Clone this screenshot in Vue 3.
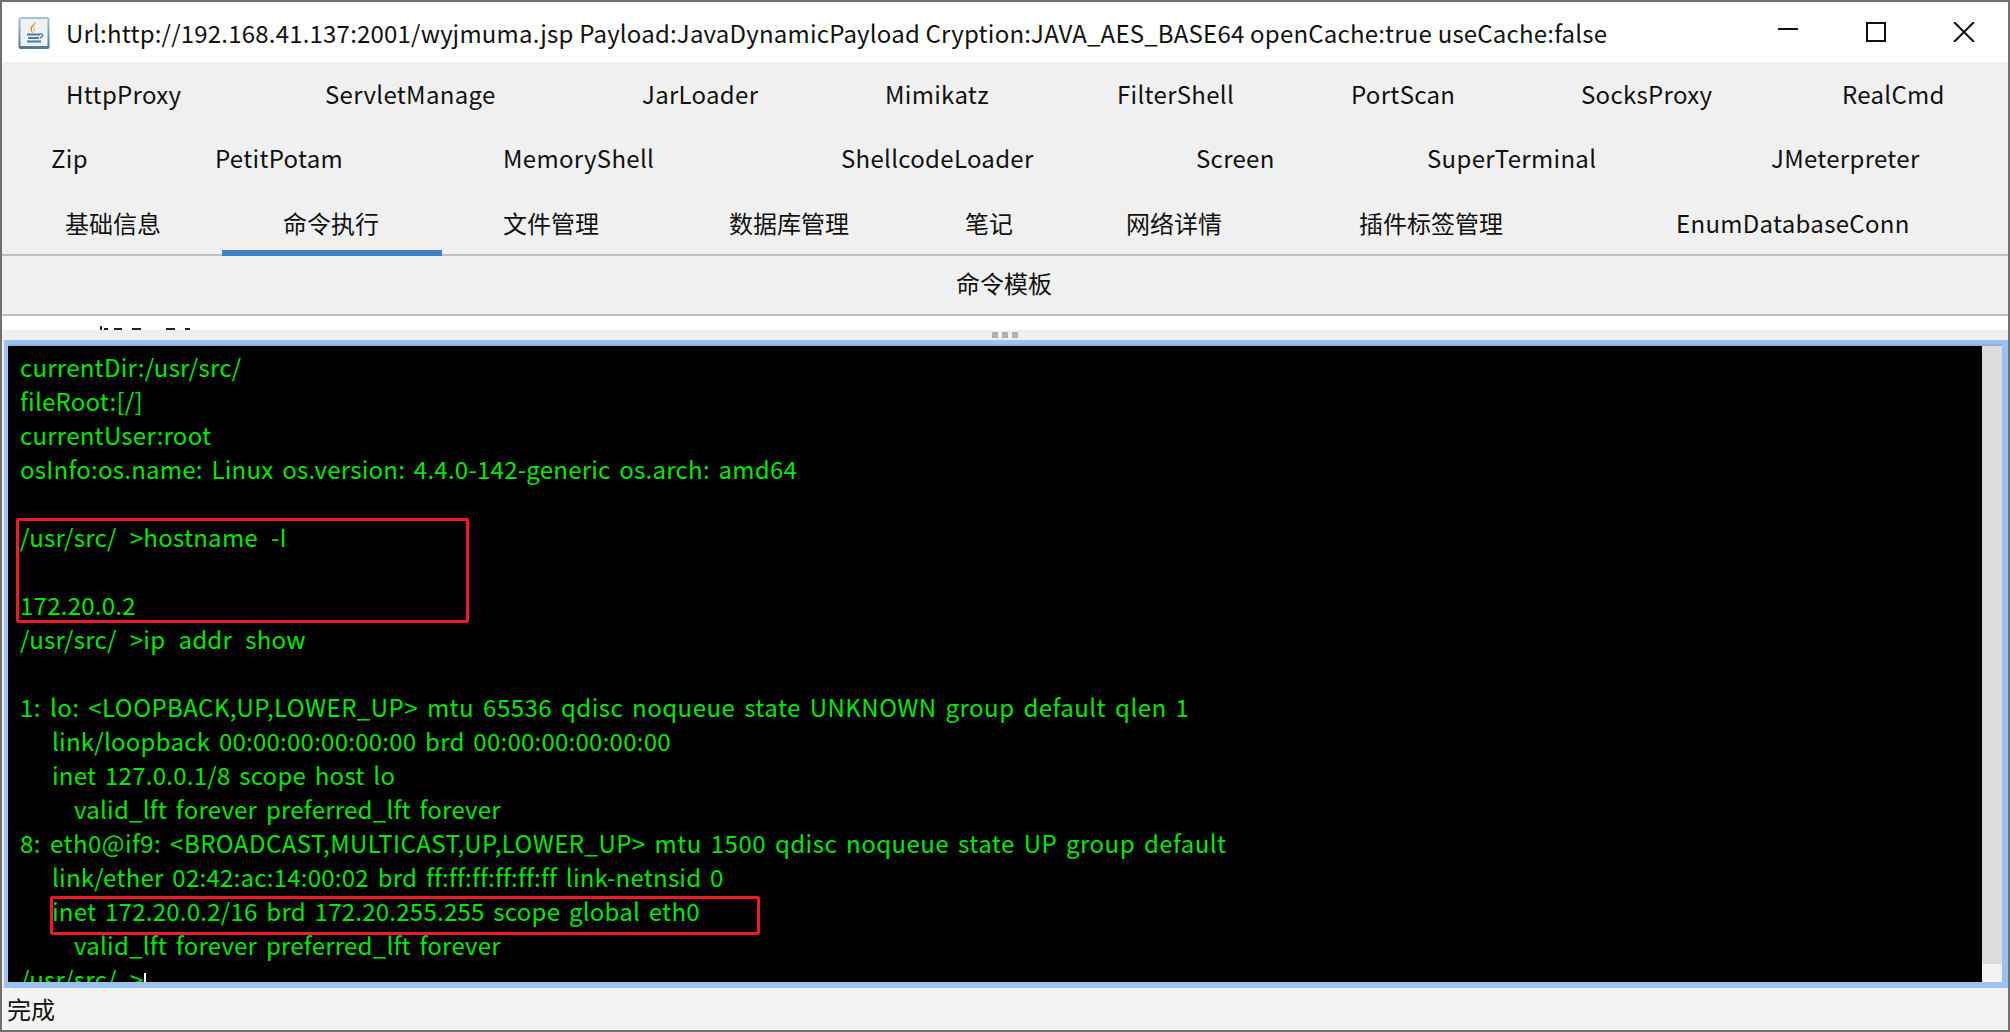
<script setup>
const title = 'Url:http://192.168.41.137:2001/wyjmuma.jsp Payload:JavaDynamicPayload Cryption:JAVA_AES_BASE64 openCache:true useCache:false'

// [label, text left, box end] in window pixels
const rowData = [
  [['HttpProxy', 66, 250], ['ServletManage', 325, 570], ['JarLoader', 642, 820], ['Mimikatz', 885, 1054], ['FilterShell', 1117, 1288], ['PortScan', 1351, 1516], ['SocksProxy', 1581, 1778], ['RealCmd', 1842, 2008]],
  [['Zip', 51, 130], ['PetitPotam', 215, 420], ['MemoryShell', 503, 740], ['ShellcodeLoader', 841, 1120], ['Screen', 1196, 1340], ['SuperTerminal', 1427, 1680], ['JMeterpreter', 1771, 2008]],
  [['基础信息', 65, 222], ['命令执行', 283, 442], ['文件管理', 503, 659], ['数据库管理', 729, 920], ['笔记', 965, 1058], ['网络详情', 1126, 1292], ['插件标签管理', 1359, 1572], ['EnumDatabaseConn', 1676, 2008]]
]

const rows = rowData.map((row) => {
  let start = 2
  return row.map(([label, x, end]) => {
    const tab = {
      label,
      width: end - start,
      pad: x - start,
      active: label === '命令执行',
      latin: /^[A-Za-z]+$/.test(label)
    }
    start = end
    return tab
  })
})

const rawLines = [
  [0, 'currentDir:/usr/src/'],
  [0, 'fileRoot:[/]'],
  [0, 'currentUser:root'],
  [0, 'osInfo:os.name: Linux os.version: 4.4.0-142-generic os.arch: amd64'],
  [0, ''],
  [0, '/usr/src/ >hostname -I'],
  [0, ''],
  [0, '172.20.0.2'],
  [0, '/usr/src/ >ip addr show'],
  [0, ''],
  [0, '1: lo: <LOOPBACK,UP,LOWER_UP> mtu 65536 qdisc noqueue state UNKNOWN group default qlen 1', true],
  [32, 'link/loopback 00:00:00:00:00:00 brd 00:00:00:00:00:00'],
  [32, 'inet 127.0.0.1/8 scope host lo'],
  [54, 'valid_lft forever preferred_lft forever'],
  [0, '8: eth0@if9: <BROADCAST,MULTICAST,UP,LOWER_UP> mtu 1500 qdisc noqueue state UP group default', true],
  [32, 'link/ether 02:42:ac:14:00:02 brd ff:ff:ff:ff:ff:ff link-netnsid 0'],
  [32, 'inet 172.20.0.2/16 brd 172.20.255.255 scope global eth0'],
  [54, 'valid_lft forever preferred_lft forever']
]
const lines = rawLines.map(([indent, text, caps]) => ({
  indent,
  text,
  caps: !!caps,
  prompt: text.startsWith('/usr/src/')
}))
</script>

<template>
  <div class="window">
    <header class="titlebar">
      <svg class="java-icon" viewBox="0 0 32 32" aria-hidden="true">
        <defs>
          <linearGradient id="javaFrame" x1="0" y1="0" x2="0" y2="1">
            <stop offset="0" stop-color="#a9c3d8" />
            <stop offset="1" stop-color="#4f7592" />
          </linearGradient>
        </defs>
        <rect x="0.5" y="0.5" width="31" height="32" rx="2.5" fill="url(#javaFrame)" />
        <rect x="2.5" y="2.5" width="27" height="27" fill="#eef2f5" />
        <path d="M17 5c2 3-4 5-3 9 .4 1.400 1 2 1.500 2.500-2-.5-4-3-2.500-6 1-2.200 4-3 4-5.500z" fill="#e8821e" />
        <path d="M19 9c-3 1.500-3 3.500-1.800 6.500-2-1-2-5 1.800-6.500z" fill="#e8821e" />
        <path d="M9 18h13M10 21.500h11M9 25h14" stroke="#4b7ba0" stroke-width="1.800" fill="none" />
        <path d="M22 17.500c3-.6 4 2.500 0 4" stroke="#4b7ba0" stroke-width="1.400" fill="none" />
      </svg>
      <span class="title-text">{{ title }}</span>
      <div class="controls">
        <svg class="ctl ctl-min" viewBox="0 0 20 20" aria-hidden="true"><path d="M0 10h20" /></svg>
        <svg class="ctl ctl-max" viewBox="0 0 20 20" aria-hidden="true"><rect x="1" y="1" width="18" height="18" /></svg>
        <svg class="ctl ctl-close" viewBox="0 0 22 20" aria-hidden="true"><path d="M1 0l20 20M21 0L1 20" /></svg>
      </div>
    </header>

    <nav class="tabs">
      <div v-for="(row, i) in rows" :key="i" class="tab-row" :class="'row-' + i">
        <div
          v-for="tab in row"
          :key="tab.label"
          class="tab"
          :class="{ active: tab.active, latin: tab.latin }"
          :style="{ width: tab.width + 'px', paddingLeft: tab.pad + 'px' }"
        >{{ tab.label }}</div>
      </div>
    </nav>

    <div class="subtabs">命令模板</div>

    <div class="clipped-pane">
      <svg class="sliver" viewBox="0 0 100 4" aria-hidden="true">
        <rect x="0" y="0" width="2" height="4" />
        <rect x="4" y="2" width="4" height="2" />
        <rect x="14" y="2" width="8" height="2" />
        <rect x="32" y="2" width="9" height="2" />
        <rect x="66" y="2" width="9" height="2" />
        <rect x="85" y="2" width="5" height="2" />
      </svg>
    </div>

    <div class="splitter">
      <i class="grip"></i><i class="grip"></i><i class="grip"></i>
    </div>

    <section class="terminal-frame">
      <div class="terminal">
        <div class="output">
          <div
            v-for="(line, i) in lines"
            :key="i"
            class="line"
            :class="{ caps: line.caps, prompt: line.prompt }"
            :style="{ paddingLeft: line.indent + 'px' }"
          >{{ line.text }}</div>
          <div class="line prompt">/usr/src/ &gt;<span class="caret"></span></div>
        </div>
        <div class="mark mark-a"></div>
        <div class="mark mark-b"></div>
      </div>
      <div class="scrollbar"><div class="thumb"></div></div>
    </section>

    <footer class="statusbar">完成</footer>
  </div>
</template>

<style>
html, body {
  margin: 0;
  background: #f0f0f0;
  overflow: hidden;
}
</style>

<style scoped>
.window {
  width: 2010px;
  height: 1032px;
  box-sizing: border-box;
  border: 2px solid #707070;
  display: flex;
  flex-direction: column;
  background: #f0f0f0;
  font-family: "Noto Sans CJK SC", "Noto Sans", sans-serif;
  color: #111;
  overflow: hidden;
}
.titlebar {
  height: 60px;
  flex: none;
  background: #fff;
  display: flex;
  align-items: center;
  padding-left: 16px;
  position: relative;
}
.java-icon {
  width: 32px;
  height: 33px;
  flex: none;
}
.title-text {
  margin-left: 16px;
  font-size: 24px;
  letter-spacing: 0.2px;
  white-space: nowrap;
}
.controls {
  margin-left: auto;
  display: flex;
  align-items: center;
  margin-right: 33px;
}
.ctl {
  fill: none;
  stroke: #111;
  stroke-width: 2;
  display: block;
}
.ctl-min { width: 20px; height: 20px; margin-right: 68px; margin-top: -6px; }
.ctl-max { width: 20px; height: 20px; margin-right: 67px; }
.ctl-close { width: 22px; height: 20px; }

.tabs {
  flex: none;
  display: flex;
  flex-direction: column;
}
.tab-row {
  display: flex;
}
.row-0 { height: 63px; }
.row-1 { height: 65px; }
.row-2 {
  height: 66px;
  border-bottom: 2px solid #c0c0c0;
  box-sizing: border-box;
}
.tab {
  box-sizing: border-box;
  flex: none;
  font-size: 24px;
  display: flex;
  align-items: center;
  white-space: nowrap;
  position: relative;
}
.tab.latin {
  letter-spacing: 0.3px;
}
.tab.active::after {
  content: "";
  position: absolute;
  left: 0;
  right: 0;
  bottom: -2px;
  height: 6px;
  background: #3f7fc4;
}
.subtabs {
  flex: none;
  height: 58px;
  display: flex;
  align-items: center;
  justify-content: center;
  font-size: 24px;
  padding-right: 2px;
  padding-bottom: 5px;
  box-sizing: border-box;
}
.clipped-pane {
  flex: none;
  height: 16px;
  box-sizing: border-box;
  border-top: 2px solid #c0c0c0;
  background: #fff;
  display: flex;
  align-items: flex-end;
  padding-left: 98px;
}
.sliver {
  width: 100px;
  height: 4px;
  fill: #222;
  display: block;
}
.splitter {
  flex: none;
  height: 10px;
  display: flex;
  align-items: center;
  justify-content: center;
  gap: 4px;
}
.grip {
  width: 6px;
  height: 6px;
  background: #b0b0b0;
  display: block;
}
.terminal-frame {
  flex: none;
  height: 648px;
  box-sizing: border-box;
  margin: 0 0 0 2px;
  border-style: solid;
  border-color: #99c4f0;
  border-width: 4px 6px 6px 4px;
  box-shadow: inset 0 2px 0 #88b4e4;
  padding-top: 2px;
  display: flex;
}
.terminal {
  flex: 1;
  background: #000;
  position: relative;
  overflow: hidden;
  box-sizing: border-box;
  padding: 4px 0 0 12px;
}
.output {
  font-size: 24px;
  line-height: 34px;
  letter-spacing: 0.25px;
  word-spacing: 3.1px;
  color: #00e800;
  white-space: pre;
}
.line {
  height: 34px;
}
.line.caps {
  letter-spacing: 0.47px;
}
.line.prompt {
  word-spacing: 7.5px;
}
.caret {
  display: inline-block;
  width: 2px;
  height: 24px;
  background: #fff;
  vertical-align: -8px;
  margin-left: 1px;
}
.mark {
  position: absolute;
  box-sizing: border-box;
  border: 3px solid #ed1c24;
  border-radius: 2px;
}
.mark-a {
  left: 8px;
  top: 172px;
  width: 453px;
  height: 105px;
}
.mark-b {
  left: 42px;
  top: 550px;
  width: 710px;
  height: 39px;
}
.scrollbar {
  width: 20px;
  flex: none;
  background: #f3f3f3;
}
.thumb {
  height: 618px;
  background: #dcdcdc;
}
.statusbar {
  flex: 1;
  background: #f3f3f3;
  font-size: 24px;
  display: flex;
  align-items: center;
  padding-left: 5px;
  padding-bottom: 2px;
  box-sizing: border-box;
}
</style>
